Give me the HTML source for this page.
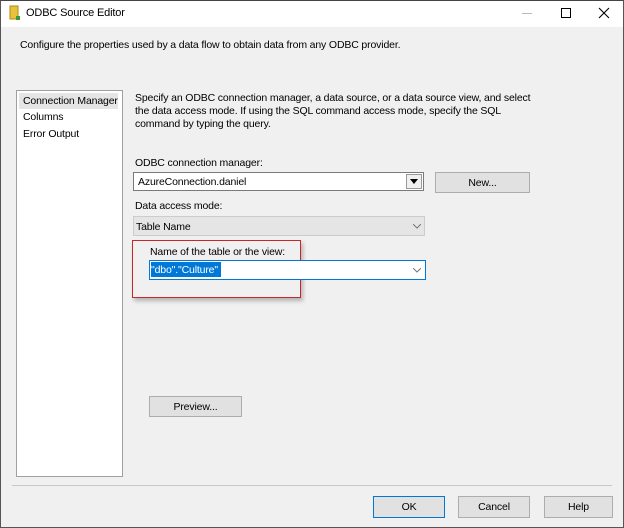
<!DOCTYPE html>
<html><head><meta charset="utf-8"><style>
*{box-sizing:border-box;margin:0;padding:0}
body{width:624px;height:528px;overflow:hidden;background:#f0f0f0;font-family:"Liberation Sans",sans-serif;font-size:10.5px;letter-spacing:-0.15px;color:#000;position:relative}
.a{position:absolute}
.win{left:0;top:0;width:624px;height:528px;border:1px solid #555;border-top:1px solid #444}
.title{left:1px;top:1px;width:622px;height:26px;background:#fff}
.btn{background:#e1e1e1;border:1px solid #adadad;text-align:center;line-height:20px}
.combo{background:#fff;border:1px solid #7a7a7a}
</style></head><body>
<div class="a win"></div>
<div class="a title"></div>
<svg class="a" style="left:9px;top:5px" width="12" height="16" viewBox="0 0 12 16"><rect x="1" y="1" width="8" height="13" fill="#e8c23a" stroke="#b08a10"/><rect x="7" y="11" width="4" height="4" fill="#3a9a3a"/></svg>
<div class="a" style="left:26px;top:7px;font-size:11px">ODBC Source Editor</div>
<div class="a" style="left:522px;top:13px;width:10px;height:1px;background:#bbb"></div>
<div class="a" style="left:561px;top:8px;width:10px;height:10px;border:1px solid #000"></div>
<svg class="a" style="left:598px;top:7px" width="12" height="12"><path d="M1 1L11 11M11 1L1 11" stroke="#000" stroke-width="1.1"/></svg>
<div class="a" style="left:20px;top:39px">Configure the properties used by a data flow to obtain data from any ODBC provider.</div>
<div class="a" style="left:16px;top:90px;width:107px;height:387px;background:#fff;border:1px solid #a0a0a0"></div>
<div class="a" style="left:19px;top:93px;width:99px;height:16px;background:#e5e5e5"></div>
<div class="a" style="left:23px;top:95px">Connection Manager</div>
<div class="a" style="left:23px;top:111px">Columns</div>
<div class="a" style="left:23px;top:128px">Error Output</div>
<div class="a" style="left:135px;top:92px;line-height:13px;width:400px">Specify an ODBC connection manager, a data source, or a data source view, and select<br>the data access mode. If using the SQL command access mode, specify the SQL<br>command by typing the query.</div>
<div class="a" style="left:135px;top:157px">ODBC connection manager:</div>
<div class="a combo" style="left:133px;top:172px;width:291px;height:19px"></div>
<div class="a" style="left:138px;top:176px">AzureConnection.daniel</div>
<div class="a" style="left:406px;top:174px;width:16px;height:15px;background:#f0f0f0;border:1px solid #999"></div>
<svg class="a" style="left:410px;top:179px" width="8" height="5"><path d="M0 0H8L4 5Z" fill="#000"/></svg>
<div class="a btn" style="left:435px;top:172px;width:95px;height:21px">New...</div>
<div class="a" style="left:135px;top:200px">Data access mode:</div>
<div class="a" style="left:133px;top:216px;width:292px;height:20px;background:#e5e5e5;border:1px solid #ccc"></div>
<div class="a" style="left:136px;top:221px">Table Name</div>
<svg class="a" style="left:413px;top:224px" width="8" height="5"><path d="M0 0L4 4L8 0" stroke="#777" fill="none"/></svg>
<div class="a" style="left:132px;top:240px;width:169px;height:58px;border:1.5px solid #c8262b;box-shadow:2px 3px 4px rgba(0,0,0,.25)"></div>
<div class="a" style="left:150px;top:246px">Name of the table or the view:</div>
<div class="a" style="left:149px;top:260px;width:277px;height:20px;background:#fff;border:1px solid #0078d7"></div>
<div class="a" style="left:151px;top:262px;width:70px;height:15px;background:#0078d7"></div>
<div class="a" style="left:151px;top:264px;color:#fff">"dbo"."Culture"</div>
<svg class="a" style="left:413px;top:268px" width="8" height="5"><path d="M0 0L4 4L8 0" stroke="#777" fill="none"/></svg>
<div class="a btn" style="left:149px;top:396px;width:93px;height:21px">Preview...</div>
<div class="a" style="left:12px;top:485px;width:600px;height:1px;background:#c8c8c8"></div>
<div class="a btn" style="left:373px;top:496px;width:72px;height:22px;border:1px solid #0078d7">OK</div>
<div class="a btn" style="left:458px;top:496px;width:72px;height:22px">Cancel</div>
<div class="a btn" style="left:544px;top:496px;width:69px;height:22px">Help</div>
</body></html>
